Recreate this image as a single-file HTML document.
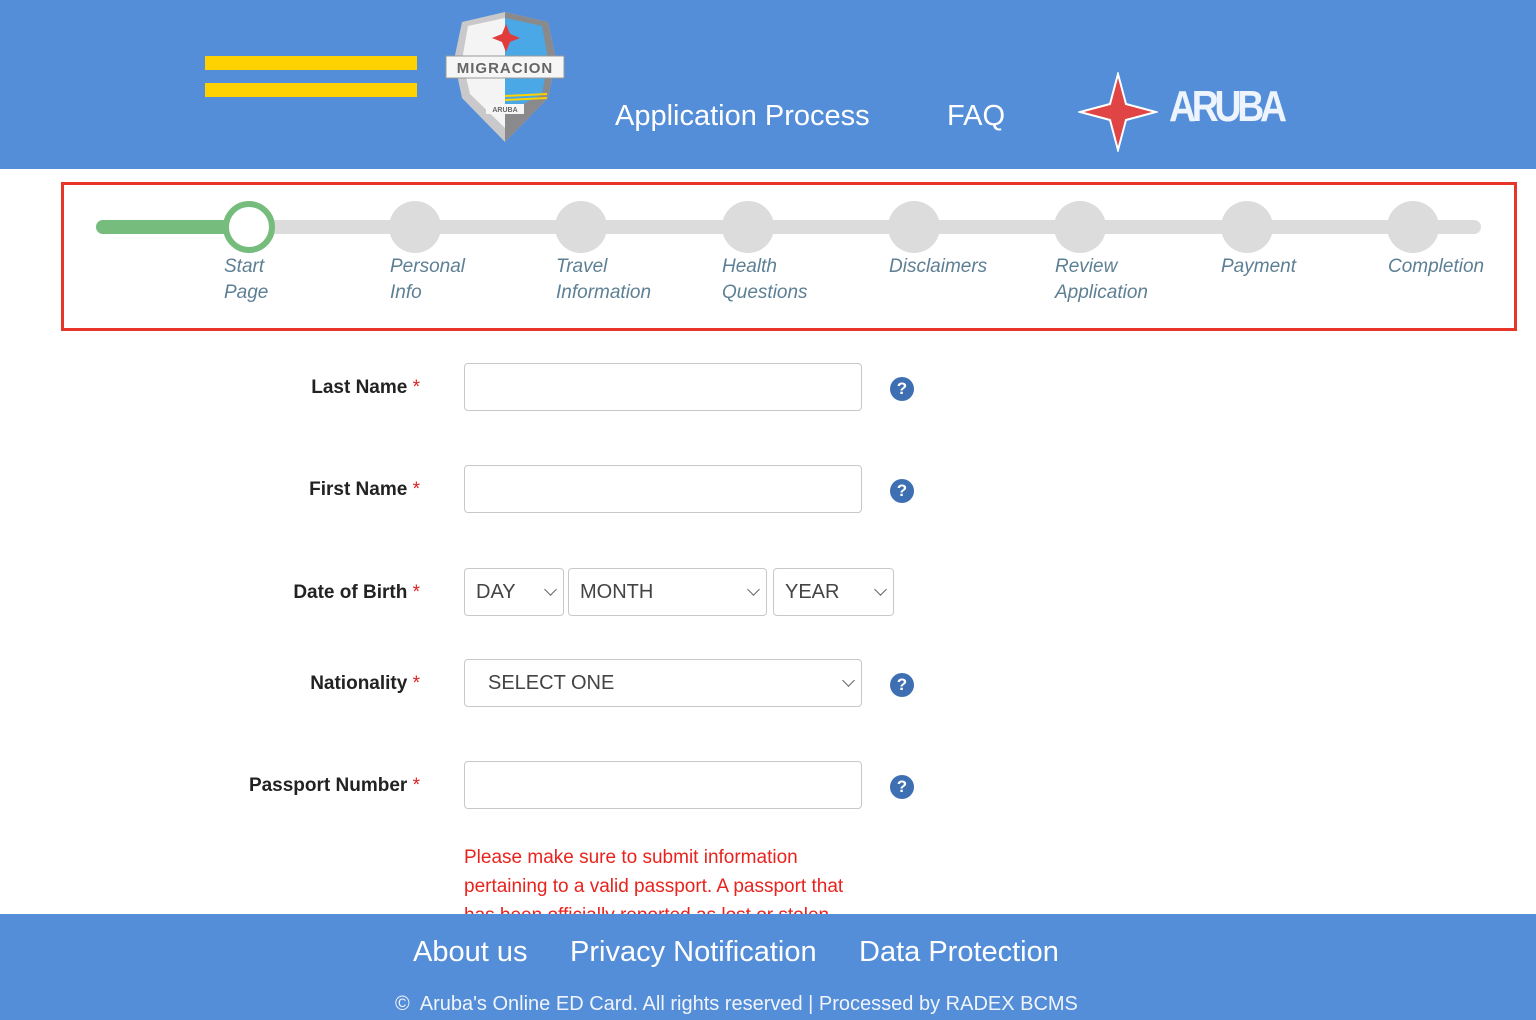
<!DOCTYPE html>
<html><head><meta charset="utf-8"><style>
*{margin:0;padding:0;box-sizing:border-box}
body{width:1536px;height:1020px;overflow:hidden;background:#fff;font-family:"Liberation Sans",sans-serif;position:relative}
.hdr{position:absolute;left:0;top:0;width:1536px;height:169px;background:#548dd8}
.bar{position:absolute;left:205px;width:212px;height:14px;background:#fdd200}
.nav{position:absolute;color:#fff;font-size:29px;top:100px}
.box{position:absolute;left:61px;top:182px;width:1456px;height:149px;border:3px solid #e8352a}
.track{position:absolute;left:96px;top:220px;width:1385px;height:14px;border-radius:7px;background:#dcdcdc}
.green{position:absolute;left:96px;top:220px;width:150px;height:14px;border-radius:7px;background:#76bd7d}
.c{position:absolute;top:201px;width:52px;height:52px;border-radius:50%;background:#dcdcdc}
.lb{position:absolute;top:254px;color:#5d7f94;font-style:italic;font-size:19px;line-height:26px}
.fl{position:absolute;right:1116px;font-weight:bold;font-size:19px;color:#222}
.fl span{color:#e02020;font-weight:normal}
.in{position:absolute;left:464px;height:48px;border:1.5px solid #c8c8c8;border-radius:4px;background:#fff;font-size:20px;color:#444;padding-left:11px;line-height:47px}
.chev{position:absolute;right:8px;top:16px;width:9px;height:9px;border-right:1.5px solid #666;border-bottom:1.5px solid #666;transform:rotate(45deg)}
.q{position:absolute;left:890px;width:24px;height:24px;border-radius:50%;background:#3e6fb2;color:#fff;font-weight:bold;font-size:17px;text-align:center;line-height:24px}
.red{position:absolute;left:464px;top:843px;color:#e8231d;font-size:19px;line-height:29px;width:412px}
.ftr{position:absolute;left:0;top:914px;width:1536px;height:106px;background:#548dd8;color:#fff}
</style></head><body>
<div class="hdr">
<div class="bar" style="top:56px"></div><div class="bar" style="top:83px"></div>
<svg style="position:absolute;left:444px;top:10px" width="122" height="134" viewBox="0 0 122 134">
<path d="M18 12 L61 2 L104 12 L112 50 L104 88 L61 132 L18 88 L10 50Z" fill="#c9c9cb"/>
<path d="M61 2 L104 12 L112 50 L104 88 L61 132Z" fill="#8a8a8d"/>
<path d="M24 16 L61 8 L61 118 L26 84 L18 50Z" fill="#f4f4f4"/>
<path d="M61 8 L98 16 L104 50 L98 84 L61 104Z" fill="#4aa8e6"/>
<path d="M61 86 L103 84 M61 90 L103 88" stroke="#fdd200" stroke-width="2"/>
<path d="M62 14 L66 24 L76 28 L66 32 L62 42 L58 32 L48 28 L58 24Z" fill="#e23b3b"/>
<rect x="2" y="46" width="118" height="22" fill="#f6f6f6" stroke="#999"/>
<text x="61" y="63" font-family="Liberation Sans" font-weight="bold" font-size="15" fill="#666" text-anchor="middle" letter-spacing="1">MIGRACION</text>
<rect x="42" y="94" width="38" height="10" fill="#f6f6f6"/>
<text x="61" y="102" font-family="Liberation Sans" font-weight="bold" font-size="7" fill="#666" text-anchor="middle">ARUBA</text>
</svg>
<div class="nav" style="left:615px">Application Process</div>
<div class="nav" style="left:947px">FAQ</div>
<svg style="position:absolute;left:1078px;top:72px" width="80" height="80" viewBox="0 0 80 80">
<path d="M40 2 L48 32 L78 40 L48 48 L40 78 L32 48 L2 40 L32 32Z" fill="#e04444" stroke="#fff" stroke-width="2"/></svg>
<div style="position:absolute;left:1169px;top:82px;color:#eef4fd;font-weight:bold;font-size:44px;letter-spacing:-5px;transform:scaleX(0.85);transform-origin:left">ARUBA</div>
</div>
<div class="box"></div>
<div class="track"></div><div class="green"></div>
<div class="c" style="left:223px;background:#fff;border:6px solid #76bd7d"></div>
<div class="c" style="left:389px"></div><div class="c" style="left:555px"></div><div class="c" style="left:722px"></div><div class="c" style="left:888px"></div><div class="c" style="left:1054px"></div><div class="c" style="left:1221px"></div><div class="c" style="left:1387px"></div>
<div class="lb" style="left:224px">Start<br>Page</div>
<div class="lb" style="left:390px">Personal<br>Info</div>
<div class="lb" style="left:556px">Travel<br>Information</div>
<div class="lb" style="left:722px">Health<br>Questions</div>
<div class="lb" style="left:889px">Disclaimers</div>
<div class="lb" style="left:1055px">Review<br>Application</div>
<div class="lb" style="left:1221px">Payment</div>
<div class="lb" style="left:1388px">Completion</div>

<div class="fl" style="top:377px">Last Name <span>*</span></div>
<div class="in" style="top:363px;width:398px"></div><div class="q" style="top:377px">?</div>
<div class="fl" style="top:479px">First Name <span>*</span></div>
<div class="in" style="top:465px;width:398px"></div><div class="q" style="top:479px">?</div>
<div class="fl" style="top:582px">Date of Birth <span>*</span></div>
<div class="in" style="top:568px;width:100px">DAY<div class="chev"></div></div>
<div class="in" style="top:568px;left:568px;width:199px">MONTH<div class="chev"></div></div>
<div class="in" style="top:568px;left:773px;width:121px">YEAR<div class="chev"></div></div>
<div class="fl" style="top:673px">Nationality <span>*</span></div>
<div class="in" style="top:659px;width:398px;padding-left:23px">SELECT ONE<div class="chev"></div></div><div class="q" style="top:673px">?</div>
<div class="fl" style="top:775px">Passport Number <span>*</span></div>
<div class="in" style="top:761px;width:398px"></div><div class="q" style="top:775px">?</div>
<div class="red">Please make sure to submit information pertaining to a valid passport. A passport that has been officially reported as lost or stolen</div>
<div class="ftr">
<div style="position:absolute;left:413px;top:22px;font-size:29px">About us</div>
<div style="position:absolute;left:570px;top:22px;font-size:29px">Privacy Notification</div>
<div style="position:absolute;left:859px;top:22px;font-size:29px">Data Protection</div>
<div style="position:absolute;left:395px;top:79px;font-size:20px;color:#f0f4fb">©&nbsp; Aruba's Online ED Card. All rights reserved | Processed by RADEX BCMS</div>
</div>
</body></html>
